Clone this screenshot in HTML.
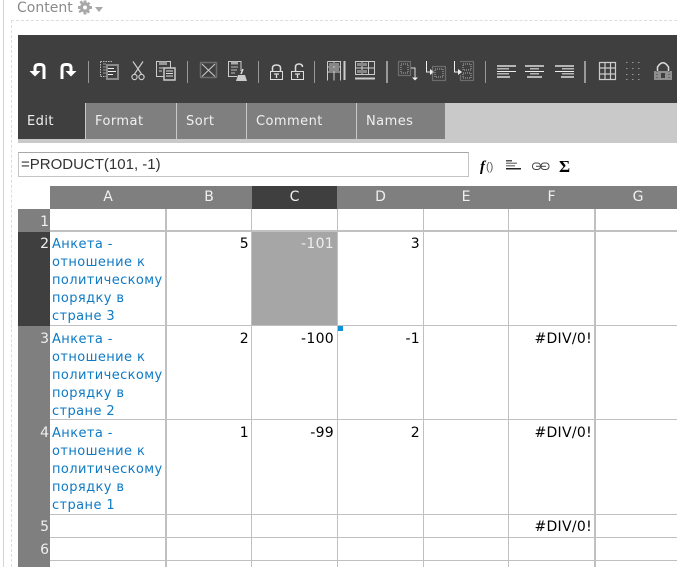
<!DOCTYPE html>
<html><head><meta charset="utf-8">
<style>
html,body{margin:0;padding:0;background:#fff;}
#p{position:relative;width:677px;height:567px;overflow:hidden;font-family:"DejaVu Sans",sans-serif;font-size:13px;}
#p div{position:absolute;white-space:nowrap;}
.b{box-sizing:border-box;}
.t{color:#f0f0f0;top:104px;height:36px;line-height:36px;padding-left:9px;box-sizing:border-box;letter-spacing:.45px;}
.tb{position:absolute;top:103px;height:36px;background:#7f7f7f;}
.c{top:186px;height:23px;line-height:23px;color:#f0f0f0;text-align:center;background:#7f7f7f;font-size:14px;}
.r{left:18px;width:31px;text-align:right;color:#f0f0f0;line-height:18px;font-size:14px;}
.n{text-align:right;line-height:18px;color:#000;font-size:14px;letter-spacing:.3px;}
.a{left:52px;width:114px;line-height:18px;color:#0e7ac4;white-space:normal!important;letter-spacing:.4px;}
.v{background:#c0c0c0;width:1px;top:209px;height:358px;}
.h{background:#c0c0c0;height:1px;left:50px;width:627px;}
</style></head><body>
<div id="p">
<div style="left:3px;top:0;width:1px;height:567px;background:#d4d4d4"></div>
<div style="left:11px;top:20px;width:0;height:547px;border-left:1px dashed #ddd"></div>
<div style="left:11px;top:20px;width:666px;height:0;border-top:1px dashed #ddd"></div>
<div style="left:17px;top:1px;line-height:15px;font-size:14px;color:#8a8a8a">Content</div>

<div style="left:18px;top:35px;width:659px;height:68px;background:#3f3f3f"></div>
<div style="left:18px;top:103px;width:659px;height:40px;background:#c9c9c9"></div>
<div class="tb" style="left:18px;width:67px;background:#3f3f3f"></div>
<div class="tb" style="left:86px;width:90px"></div>
<div class="tb" style="left:177px;width:69px"></div>
<div class="tb" style="left:247px;width:109px"></div>
<div class="tb" style="left:357px;width:88px"></div>
<div class="t" style="left:18px;width:67px">Edit</div>
<div class="t" style="left:86px;width:90px">Format</div>
<div class="t" style="left:177px;width:69px">Sort</div>
<div class="t" style="left:247px;width:109px">Comment</div>
<div class="t" style="left:357px;width:88px">Names</div>

<div class="b" style="left:18px;top:152px;width:451px;height:25px;border:1px solid #c4c4c4;border-top-color:#a8a8a8;font-family:'Liberation Sans',sans-serif;font-size:15px;line-height:23px;padding-left:2px;color:#333">=PRODUCT(101, -1)</div>

<div class="c" style="left:50px;width:116px">A</div>
<div class="c" style="left:166px;width:86px">B</div>
<div class="c" style="left:252px;width:85px;background:#3f3f3f">C</div>
<div class="c" style="left:337px;width:87px">D</div>
<div class="c" style="left:423px;width:86px">E</div>
<div class="c" style="left:508px;width:87px">F</div>
<div class="c" style="left:595px;width:86px">G</div>

<div style="left:18px;top:209px;width:32px;height:358px;background:#7f7f7f"></div>
<div style="left:18px;top:232px;width:32px;height:94px;background:#3f3f3f"></div>
<div style="left:252px;top:232px;width:85px;height:93px;background:#a6a6a6"></div>

<div class="v" style="left:165px;width:2px"></div>
<div class="v" style="left:251px"></div>
<div class="v" style="left:337px"></div>
<div class="v" style="left:423px"></div>
<div class="v" style="left:508px"></div>
<div class="v" style="left:594px;width:2px"></div>
<div class="h" style="top:230px;height:2px"></div>
<div class="h" style="top:325px"></div>
<div class="h" style="top:419px"></div>
<div class="h" style="top:514px"></div>
<div class="h" style="top:537px"></div>
<div class="h" style="top:560px"></div>
<div style="left:338px;top:326px;width:5px;height:5px;background:#0f93d8"></div>

<div class="r" style="top:213px">1</div>
<div class="r" style="top:235px">2</div>
<div class="r" style="top:330px">3</div>
<div class="r" style="top:424px">4</div>
<div class="r" style="top:518px">5</div>
<div class="r" style="top:541px">6</div>

<div class="a" style="top:236px">Анкета - отношение к политическому порядку в стране 3</div>
<div class="a" style="top:331px">Анкета - отношение к политическому порядку в стране 2</div>
<div class="a" style="top:425px">Анкета - отношение к политическому порядку в стране 1</div>

<div class="n" style="left:170px;width:79px;top:235px">5</div>
<div class="n" style="left:255px;width:79px;top:235px;color:#eee">-101</div>
<div class="n" style="left:340px;width:80px;top:235px">3</div>
<div class="n" style="left:170px;width:79px;top:330px">2</div>
<div class="n" style="left:255px;width:79px;top:330px">-100</div>
<div class="n" style="left:340px;width:80px;top:330px">-1</div>
<div class="n" style="left:510px;width:82px;top:330px">#DIV/0!</div>
<div class="n" style="left:170px;width:79px;top:424px">1</div>
<div class="n" style="left:255px;width:79px;top:424px">-99</div>
<div class="n" style="left:340px;width:80px;top:424px">2</div>
<div class="n" style="left:510px;width:82px;top:424px">#DIV/0!</div>
<div class="n" style="left:510px;width:82px;top:518px">#DIV/0!</div>

<svg width="677" height="567" viewBox="0 0 677 567" style="position:absolute;left:0;top:0" fill="none">
<!-- content gear -->
<g fill="#a8a8a8"><circle cx="85" cy="7.500" r="5"/><path d="M83.500 0.500h3v3h-3zM83.500 11.500h3v3h-3zM78 6h3v3h-3zM89 6h3v3h-3zM79.500 2l2-1.500 2 2.500-2 2zM88.500 2l2 1.500-2.500 2-1.500-2zM79.500 13l-1-2 2.500-1.500 1.500 2zM90 12l-2 1.500-1.500-2 2-1.500z"/><path d="M95 7h8l-4 5z"/></g>
<circle cx="85" cy="7.500" r="2" fill="#fff"/>

<!-- separators -->
<g fill="#999">
<rect x="88" y="61" width="1" height="22"/><rect x="187" y="61" width="1" height="22"/><rect x="258" y="61" width="1" height="22"/><rect x="314" y="61" width="1" height="22"/><rect x="386" y="61" width="2" height="22"/><rect x="485" y="61" width="1" height="22"/><rect x="584" y="61" width="2" height="22"/>
</g>

<!-- undo / redo -->
<path d="M44 79V68Q44 64.500 40.500 64.500H38.500Q35 64.500 35 68V72" stroke="#fff" stroke-width="3"/>
<path d="M29.500 71H40.500L35 76.500Z" fill="#fff"/>
<path d="M62 79V68Q62 64.500 65.500 64.500H67.500Q71 64.500 71 68V72" stroke="#fff" stroke-width="3"/>
<path d="M65.500 71H76.500L71 76.500Z" fill="#fff"/>

<!-- copy -->
<path d="M100.500 61.500H112M100.500 61.500V76.500H106" stroke="#bbb" stroke-dasharray="1.500 1"/>
<path d="M103 64h3M103 67h3M103 70h3M103 73h3" stroke="#999"/>
<rect x="106" y="64" width="13" height="16" fill="#8a8a8a"/>
<rect x="108" y="66" width="9" height="12" fill="#3f3f3f"/>
<path d="M108 68.500h6M108 71.500h8M108 74.500h5" stroke="#eee"/>
<!-- cut -->
<g stroke="#ccc" stroke-width="1.200">
<path d="M133 61.500L141.500 74M143 61.500L134.500 74"/>
<circle cx="134.500" cy="77" r="2.600"/><circle cx="141.500" cy="77" r="2.600"/>
</g>
<!-- paste -->
<g stroke="#ccc">
<rect x="156.500" y="61.500" width="14" height="15" />
<rect x="159" y="61.500" width="8" height="3.500" fill="#999" stroke="none"/>
<path d="M159 68h5M159 71h3" />
<rect x="164" y="68" width="11" height="12" fill="#3f3f3f" stroke="#ccc" stroke-width="1.500"/>
<path d="M166 71h7M166 73.500h7M166 76h7" stroke="#ddd"/>
</g>
<!-- clear -->
<rect x="200.500" y="62.500" width="16" height="15" stroke="#999" stroke-width="1.500" stroke-dasharray="1 1"/>
<path d="M202 64L215 76.500M215 64L202 76.500" stroke="#ccc"/>
<!-- clear format -->
<g stroke="#ccc">
<path d="M241 71V61.500H228.500V76.500H237"/>
<rect x="231" y="61.500" width="7" height="3" fill="#aaa" stroke="none"/>
<path d="M231 67h7M231 70h6M231 73h4" stroke="#bbb"/>
<path d="M243 69L241 74" stroke-width="1.500" stroke="#ddd"/>
<path d="M238 75h7l2 6h-11z" fill="#ccc" stroke="none"/>
</g>
<!-- locks -->
<g stroke="#ddd">
<path d="M272.500 71V68Q272.500 65 276.500 65Q280.500 65 280.500 68V71" stroke-width="1.500"/>
<rect x="270.500" y="71.500" width="12" height="8"/>
<path d="M274 74h5M276.500 74v4" stroke-width="1.300"/>
<path d="M295.500 71V67Q295.500 64 299 64Q302.500 64 302.500 67" stroke-width="1.500"/>
<rect x="291.500" y="71.500" width="12" height="8"/>
<path d="M295 74h5M297.500 74v4" stroke-width="1.300"/>
</g>
<!-- insert col -->
<g stroke="#ccc">
<path d="M327.500 61.500H340.500V80.500M327.500 61.500V80.500M334 61.500V80.500M327.500 67H340.500M327.500 72H340.500"/>
<rect x="329" y="63" width="4" height="3" fill="#888" stroke="none"/><rect x="335" y="63" width="4" height="3" fill="#888" stroke="none"/>
<rect x="329" y="68" width="4" height="3" fill="#888" stroke="none"/><rect x="335" y="68" width="4" height="3" fill="#888" stroke="none"/>
<path d="M344.500 61V80" stroke-width="2"/>
</g>
<!-- insert row -->
<g stroke="#ccc">
<path d="M355.500 61.500H374.500V74.500H355.500ZM355.500 68H374.500M362 61.500V74.500M368.500 61.500V74.500"/>
<rect x="357" y="63" width="4" height="3" fill="#888" stroke="none"/><rect x="363" y="63" width="4" height="3" fill="#888" stroke="none"/>
<rect x="357" y="70" width="4" height="3" fill="#888" stroke="none"/><rect x="363" y="70" width="4" height="3" fill="#888" stroke="none"/>
<path d="M355 78.500H375" stroke-width="2"/>
</g>
<!-- move icons -->
<g stroke="#999">
<rect x="398.500" y="61.500" width="12" height="14" stroke-width="1.200" stroke-dasharray="1 1"/>
<rect x="401" y="64" width="7" height="9" stroke-dasharray="1 1" stroke-width="2" stroke="#777"/>
<path d="M411 68H415V78" stroke="#ddd" stroke-width="1"/>
<path d="M412 77.500h6l-3 3z" fill="#eee" stroke="none"/>
<path d="M426.500 61V72H431" stroke="#eee"/>
<path d="M430 69l4 3-4 3z" fill="#eee" stroke="none"/>
<rect x="432.500" y="66.500" width="13" height="14" stroke-width="1.200" stroke-dasharray="1 1"/>
<rect x="435" y="69" width="8" height="8" stroke-dasharray="1 1" stroke-width="2" stroke="#777"/>
<path d="M454.500 61V72H459" stroke="#eee"/>
<path d="M458 69l4 3-4 3z" fill="#eee" stroke="none"/>
<path d="M460.500 61.500H473.500V80.500H460.500V75" stroke-width="1.200" stroke-dasharray="1 1"/>
<rect x="463" y="64" width="8" height="6" stroke-dasharray="1 1" stroke-width="2" stroke="#777"/>
<rect x="463" y="73" width="8" height="5" stroke-dasharray="1 1" stroke-width="2" stroke="#777"/>
</g>
<!-- align -->
<g fill="#b5b5b5">
<rect x="497" y="65" width="19" height="2"/><rect x="497" y="68" width="12" height="1.500"/><rect x="497" y="71" width="19" height="1" fill="#eee"/><rect x="497" y="73" width="12" height="1.500"/><rect x="497" y="76" width="13" height="2"/>
<rect x="525" y="65" width="19" height="2"/><rect x="530" y="68" width="9" height="1.500"/><rect x="525" y="71" width="19" height="1" fill="#eee"/><rect x="530" y="73" width="9" height="1.500"/><rect x="527" y="76" width="15" height="2"/>
<rect x="555" y="65" width="19" height="2"/><rect x="562" y="68" width="12" height="1.500"/><rect x="555" y="71" width="19" height="1" fill="#eee"/><rect x="562" y="73" width="12" height="1.500"/><rect x="561" y="76" width="13" height="2"/>
</g>
<!-- grid -->
<path d="M599.500 62.500H615.500V79.500H599.500ZM605 62.500V79.500M610.500 62.500V79.500M599.500 68H615.500M599.500 74H615.500" stroke="#ccc" stroke-width="1.200"/>
<path d="M626 62.500H644M626 68.500H644M626 74.500H644M626 79.500H644" stroke="#999" stroke-dasharray="1.500 4.500"/>
<!-- lock cell -->
<path d="M657.500 71V67Q663 58.500 668.500 67V71" stroke="#ddd" stroke-width="1.500"/>
<rect x="654" y="71" width="18" height="9" fill="#8f8f8f"/>
<rect x="661" y="73" width="4" height="5" fill="#3f3f3f"/>
<path d="M657 71v9M669 71v9" stroke="#3f3f3f" stroke-dasharray="1 2"/>

<!-- fx row -->
<text x="480" y="171" font-family="Liberation Serif,serif" font-size="15" font-style="italic" font-weight="700" fill="#000">f</text>
<text x="486" y="170" font-family="Liberation Sans,sans-serif" font-size="11" fill="#555">()</text>
<g fill="#555"><rect x="506" y="160" width="6" height="1.500"/><rect x="506" y="162.500" width="11" height="1.500" fill="#888"/><rect x="506" y="165" width="9" height="1.500" fill="#888"/><rect x="506" y="168" width="15" height="1.500" fill="#222"/></g>
<rect x="532.500" y="163" width="8" height="6.500" rx="3" stroke="#444"/><rect x="541" y="163" width="8" height="6.500" rx="3" stroke="#444"/><path d="M536 166.300h10" stroke="#444"/>
<text x="559" y="172" font-family="Liberation Serif,serif" font-size="17" font-weight="700" fill="#000">Σ</text>
</svg>
</div>
</body></html>
